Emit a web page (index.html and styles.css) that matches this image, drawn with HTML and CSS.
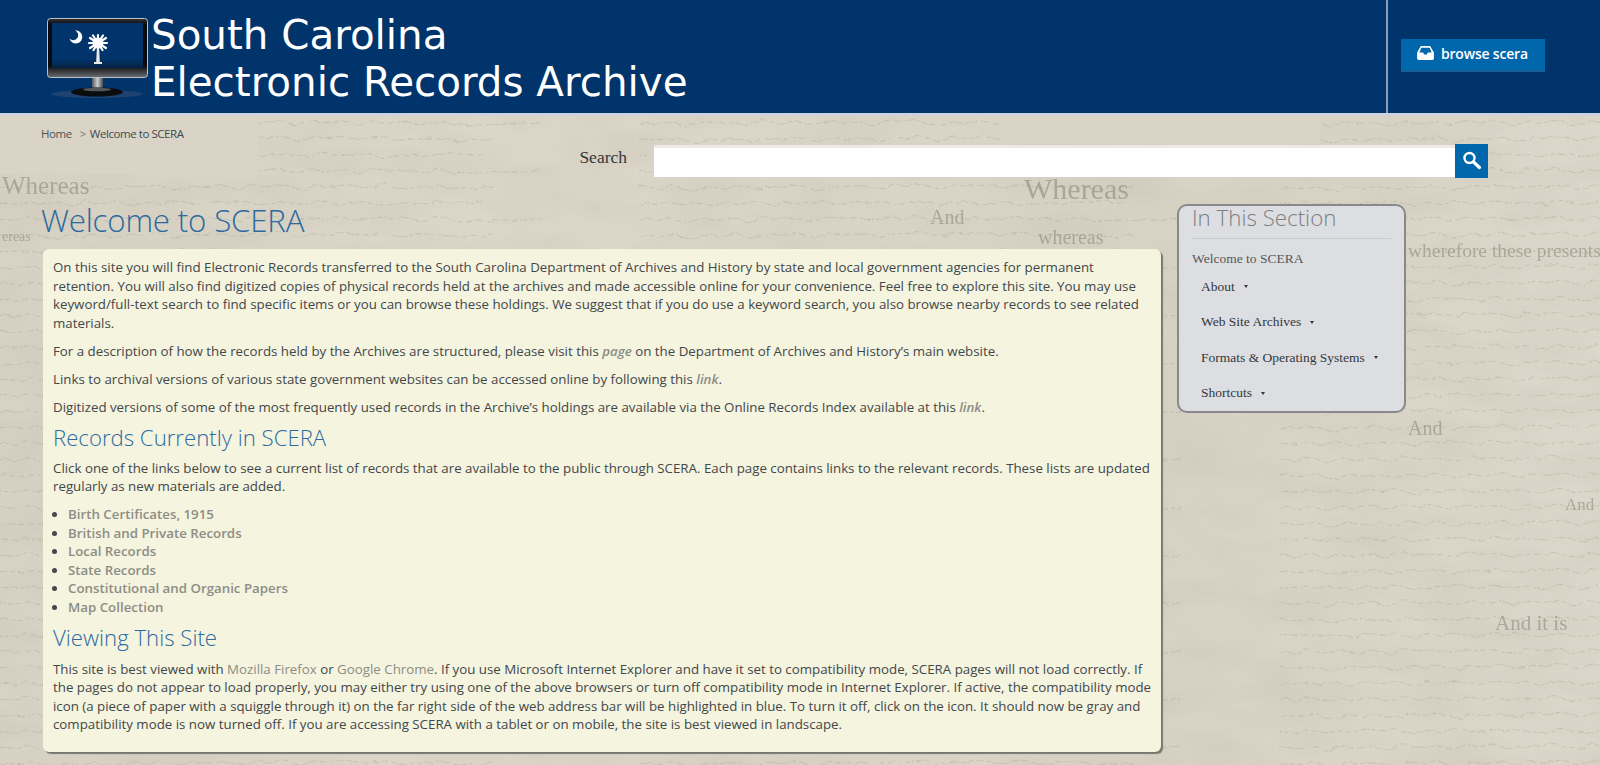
FILE: index.html
```html
<!DOCTYPE html>
<html lang="en">
<head>
<meta charset="utf-8">
<title>Welcome to SCERA</title>
<link rel="stylesheet" href="styles.css">
</head>
<body>
<header class="site-header">
  <div class="brand">
    <svg class="logo" width="104" height="84" viewBox="0 0 104 84" aria-hidden="true">
      <defs>
        <linearGradient id="glass" x1="0" y1="0" x2="0" y2="1">
          <stop offset="0" stop-color="#333336"/><stop offset=".1" stop-color="#0b0b0d"/><stop offset=".8" stop-color="#0a0a0c"/><stop offset="1" stop-color="#6a6e72"/>
        </linearGradient>
        <linearGradient id="screen" x1="0" y1="0" x2="0" y2="1">
          <stop offset="0" stop-color="#00346b"/><stop offset=".8" stop-color="#00346b"/><stop offset="1" stop-color="#07203f"/>
        </linearGradient>
        <linearGradient id="neck" x1="0" y1="0" x2="1" y2="0">
          <stop offset="0" stop-color="#55595d"/><stop offset=".5" stop-color="#c9cdd0"/><stop offset="1" stop-color="#484c50"/>
        </linearGradient>
      </defs>
      <ellipse cx="50" cy="77" rx="46" ry="4" fill="#1f4270"/>
      <rect x="45" y="61" width="11" height="11" fill="url(#neck)"/>
      <ellipse cx="50" cy="75" rx="26" ry="4.500" fill="#0c0c0e"/>
      <ellipse cx="50" cy="72.500" rx="14" ry="1.800" fill="#54585c"/>
      <rect x=".5" y="1.500" width="100" height="59" rx="3" fill="url(#glass)" stroke="#b9c2cc"/>
      <rect x="5" y="6" width="91" height="45" fill="url(#screen)"/>
      <path d="M28 13.500A6.500 6.500 0 1 1 22.500 21.500A5 5 0 1 0 28 13.500z" fill="#fff"/>
      <path d="M50 28h2l.8 17H55v2h-8v-2h2.200z" fill="#e8e8e8"/>
      <circle cx="51" cy="26" r="5.500" fill="#fff"/>
      <g stroke="#fff" stroke-width="2.200" stroke-linecap="round">
        <path d="M51 26L51 18M51 26L46 18.500M51 26L56 18.500M51 26L43 21M51 26L59 21M51 26L42 26M51 26L60 26M51 26L43 31M51 26L59 31M51 26L46.500 33M51 26L55.500 33"/>
      </g>
    </svg>
    <div class="site-title">South Carolina<br>Electronic Records Archive</div>
  </div>
  <div class="header-action">
    <a class="browse-btn" href="#">
      <svg width="17" height="14" viewBox="0 0 18 15" aria-hidden="true"><path d="M4 0h10l4 7v6a2 2 0 0 1-2 2H2a2 2 0 0 1-2-2V7zM4.500 2L2.500 7h4l1 2h3l1-2h4l-2-5z" fill="#fff" fill-rule="evenodd"/></svg>
      <span>browse scera</span>
    </a>
  </div>
</header>

<div class="page">
  <svg class="parchment" width="1600" height="649" aria-hidden="true">
    <defs>
      <pattern id="script" width="640" height="48" patternUnits="userSpaceOnUse">
        <g fill="none" stroke="#a8a28c" stroke-width=".8" stroke-dasharray="3 1 2 1 5 1 2 2 4 1 1 2 6 3 2 1 4 4">
          <path d="M0 8c8-3 12 3 20 0s10-3 18 0 12 2 20-1 10 3 20 1 14-3 22 0 10 2 18-2 14 3 24 1 12-2 20 0 14 2 22-1 12 2 20 1 10-3 20 0 12 2 22-1 10 2 20 0 12-2 20 1 14 2 22-1 10 2 18 1 14-2 22 0 10 2 20-1 14 2 22 1 12-2 20 0 12 2 20 0 14-2 20 1 12 1 28 1 20-1 30-1 40 0 30-2 50-1"/>
          <path stroke-dashoffset="7" d="M0 24c10-3 14 2 24 0s12-2 20 1 10 2 20-1 12 2 22 0 10-2 18 0 14 2 22-1 12 2 20 0 12-2 22 1 10 1 20-1 14 2 22 0 10-2 18 0 12 2 22-1 12 2 20 0 14-2 22 1 10 2 18-1 14 2 22 0 10-2 20 0 12 2 22 0 12-2 20 1 14 0 20 0 20-2 30 0 30 2 50 0"/>
          <path stroke-dashoffset="13" d="M0 40c8-2 14 2 22-1s12 2 20 1 12-2 22 0 10 2 18-1 14 2 24 0 10-2 20 1 12 1 20-1 12 2 22 0 12-2 20 0 12 2 20-1 14 2 22 1 10-2 20 0 12 2 20 0 12-2 22 0 10 2 20 0 14-2 20 0 14 2 22 0 12-2 20 1 18 0 30-1 20 2 30 0 30-1 50 0"/>
        </g>
      </pattern>
      <linearGradient id="sheet" x1="0" y1="0" x2="1" y2="0">
        <stop offset="0" stop-color="#d7d2c4"/><stop offset=".3" stop-color="#dbd6c8"/><stop offset=".62" stop-color="#d9d4c5"/><stop offset=".65" stop-color="#d6d1c2"/><stop offset="1" stop-color="#dcd7ca"/>
      </linearGradient>
      <filter id="wobble" x="0" y="0" width="100%" height="100%">
        <feTurbulence type="fractalNoise" baseFrequency=".09" numOctaves="2" seed="4"/>
        <feDisplacementMap in="SourceGraphic" scale="6"/>
      </filter>
      <filter id="mottle" x="0" y="0" width="100%" height="100%">
        <feTurbulence type="fractalNoise" baseFrequency=".012 .03" numOctaves="3" seed="8"/>
        <feColorMatrix values="0 0 0 0 .55  0 0 0 0 .52  0 0 0 0 .44  0 0 0 .55 -.18"/>
      </filter>
    </defs>
    <rect width="1600" height="649" fill="url(#sheet)"/>
    <rect width="1600" height="649" filter="url(#mottle)"/>
    <rect y="0" width="1600" height="649" fill="url(#script)" filter="url(#wobble)" opacity=".55"/>
    <rect x="0" y="0" width="258" height="58" fill="#d9d4c6"/>
    <rect x="1000" y="0" width="320" height="28" fill="#d9d4c6"/>
    <g class="script-word">
      <text x="2" y="78" font-size="25">Whereas</text>
      <text x="2" y="125" font-size="14">ereas</text>
      <text x="1024" y="83" font-size="30">Whereas</text>
      <text x="1038" y="128" font-size="20">whereas</text>
      <text x="1408" y="141" font-size="19.500">wherefore these presents</text>
      <text x="930" y="108" font-size="20">And</text>
      <text x="1408" y="319" font-size="20">And</text>
      <text x="1565" y="394" font-size="17">And</text>
      <text x="1495" y="514" font-size="21">And it is</text>
    </g>
  </svg>

  <nav class="breadcrumb"><a href="#">Home</a><span class="sep">&gt;</span><span>Welcome to SCERA</span></nav>

  <form class="search">
    <label class="search-label" for="q">Search</label>
    <input class="search-input" id="q" type="text">
    <button class="search-btn" type="button" aria-label="Search">
      <svg width="20" height="20" viewBox="0 0 20 20" aria-hidden="true"><circle cx="7.500" cy="7" r="5" fill="none" stroke="#fff" stroke-width="2.400"/><path d="M11.500 11l6 5.500" stroke="#fff" stroke-width="3.200" stroke-linecap="round"/></svg>
    </button>
  </form>

  <div class="columns">
    <main class="main-col">
      <h1 class="page-title">Welcome to SCERA</h1>
      <article class="content-box">
        <p>On this site you will find Electronic Records transferred to the South Carolina Department of Archives and History by state and local government agencies for permanent retention. You will also find digitized copies of physical records held at the archives and made accessible online for your convenience. Feel free to explore this site. You may use keyword/full-text search to find specific items or you can browse these holdings. We suggest that if you do use a keyword search, you also browse nearby records to see related materials.</p>
        <p>For a description of how the records held by the Archives are structured, please visit this <a class="em-link" href="#">page</a> on the Department of Archives and History’s main website.</p>
        <p>Links to archival versions of various state government websites can be accessed online by following this <a class="em-link" href="#">link</a>.</p>
        <p>Digitized versions of some of the most frequently used records in the Archive’s holdings are available via the Online Records Index available at this <a class="em-link" href="#">link</a>.</p>
        <h2>Records Currently in SCERA</h2>
        <p>Click one of the links below to see a current list of records that are available to the public through SCERA. Each page contains links to the relevant records. These lists are updated regularly as new materials are added.</p>
        <ul class="record-list">
          <li><a href="#">Birth Certificates, 1915</a></li>
          <li><a href="#">British and Private Records</a></li>
          <li><a href="#">Local Records</a></li>
          <li><a href="#">State Records</a></li>
          <li><a href="#">Constitutional and Organic Papers</a></li>
          <li><a href="#">Map Collection</a></li>
        </ul>
        <h2>Viewing This Site</h2>
        <p>This site is best viewed with <a class="plain-link" href="#">Mozilla Firefox</a> or <a class="plain-link" href="#">Google Chrome</a>. If you use Microsoft Internet Explorer and have it set to compatibility mode, SCERA pages will not load correctly. If the pages do not appear to load properly, you may either try using one of the above browsers or turn off compatibility mode in Internet Explorer. If active, the compatibility mode icon (a piece of paper with a squiggle through it) on the far right side of the web address bar will be highlighted in blue. To turn it off, click on the icon. It should now be gray and compatibility mode is now turned off. If you are accessing SCERA with a tablet or on mobile, the site is best viewed in landscape.</p>
      </article>
    </main>
    <aside class="section-nav">
      <h3>In This Section</h3>
      <div class="section-current">Welcome to SCERA</div>
      <ul class="section-list">
        <li>About<i class="caret"></i></li>
        <li>Web Site Archives<i class="caret"></i></li>
        <li>Formats &amp; Operating Systems<i class="caret"></i></li>
        <li>Shortcuts<i class="caret"></i></li>
      </ul>
    </aside>
  </div>
</div>
</body>
</html>
```
FILE: styles.css
```css
* { box-sizing: border-box; }
html, body { margin: 0; height: 100%; overflow: hidden; }
body { font-family: "Open Sans", sans-serif; color: #3b3f42; background: #dcd7c9; }
a { text-decoration: none; }

.site-header {
  height: 116px;
  background: #00346b;
  border-bottom: 3px solid #ccd3de;
  display: flex;
  justify-content: space-between;
}
.brand { display: flex; padding: 17px 0 0 47px; }
.logo { flex: none; }
.site-title {
  font-family: "DejaVu Sans", sans-serif;
  font-size: 40.400px;
  line-height: 47px;
  color: #fff;
  margin-top: -5px;
  white-space: nowrap;
}
.header-action {
  width: 214px;
  border-left: 2px solid #8b9db6;
  padding: 39px 0 0 13px;
}
.browse-btn {
  display: flex;
  align-items: center;
  gap: 7px;
  width: 144px;
  height: 33px;
  padding: 0 0 3px 16px;
  background: #0067ac;
  border-bottom: 2px solid #17609b;
  color: #fff;
  font-size: 14px;
  font-weight: 600;
  letter-spacing: -.2px;
}

.page { position: relative; height: 649px; overflow: hidden; }
.parchment { position: absolute; left: 0; top: 0; z-index: 0; }
.script-word text { font-family: "Liberation Serif", serif; fill: #8f8a7e; opacity: .6; }
.breadcrumb, .search, .columns { position: relative; z-index: 1; }

.breadcrumb {
  padding: 10px 0 0 41px;
  height: 28px;
  font-size: 11.500px;
  line-height: 15px;
  letter-spacing: -.45px;
  color: #3f4a52;
}
.breadcrumb a { color: #4b5358; }
.breadcrumb .sep { margin: 0 4px 0 8px; color: #74777a; }

.search {
  display: flex;
  align-items: flex-start;
  justify-content: flex-end;
  height: 34px;
  margin-right: 112px;
}
.search-label {
  font-family: "Liberation Serif", serif;
  font-size: 17.500px;
  line-height: 26px;
  color: #33383c;
  margin-right: 27px;
}
.search-input {
  width: 801px;
  height: 32px;
  margin-top: 1px;
  border: 0;
  border-top: 3px solid #eceae4;
  background: #fff;
}
.search-btn {
  width: 33px;
  height: 34px;
  padding: 0;
  border: 0;
  background: #0067ac;
  display: flex;
  align-items: center;
  justify-content: center;
}

.columns {
  display: flex;
  align-items: flex-start;
  padding: 26px 0 0 41px;
}
.main-col { width: 1121px; }
.page-title {
  margin: 0 0 13px;
  font-size: 31.300px;
  line-height: 32px;
  font-weight: 300;
  color: #2d6a9f;
  letter-spacing: -.2px;
}
.content-box {
  margin-left: 2px;
  width: 1118px;
  height: 503px;
  padding: 9px 9px 0 10px;
  background: #f4f4df;
  border-radius: 6px;
  box-shadow: 2px 2px 1px #77776f;
  font-size: 13.300px;
  line-height: 18.500px;
  color: #43474a;
}
.content-box p { margin: 0 0 9.800px; }
.content-box h2 {
  margin: -3px 0 7px;
  font-size: 22.200px;
  line-height: 28px;
  font-weight: 300;
  color: #2d6a9f;
}
.content-box .record-list + h2 { margin-bottom: 8px; }
.em-link { font-style: italic; font-weight: 600; color: #8d8d85; }
.plain-link { color: #8d8d85; }
.record-list { margin: 9px 0 10.500px; padding: 0 0 0 15px; }
.record-list a { color: #8d8d85; font-weight: 600; }

.section-nav {
  width: 229px;
  height: 209px;
  margin: 0 0 0 15px;
  padding: 0 13px;
  background: #dcdee1;
  border: 2px solid #88898c;
  border-radius: 10px;
  font-family: "Liberation Serif", serif;
}
.section-nav h3 {
  margin: 0;
  height: 33px;
  border-bottom: 1px solid #c8cacd;
  font-family: "Open Sans", sans-serif;
  font-size: 22.300px;
  line-height: 24px;
  font-weight: 300;
  color: #7c8084;
}
.section-current {
  margin-top: 10px;
  font-size: 13.500px;
  line-height: 20px;
  color: #55585b;
}
.section-list { list-style: none; margin: 0; padding: 0 0 0 9px; }
.section-list li {
  display: flex;
  align-items: center;
  height: 35.500px;
  font-size: 13.500px;
  color: #33383c;
}
.caret {
  width: 0;
  height: 0;
  margin-left: 9px;
  border: 2.500px solid transparent;
  border-top: 3.500px solid #33383c;
  border-bottom: 0;
}
```
